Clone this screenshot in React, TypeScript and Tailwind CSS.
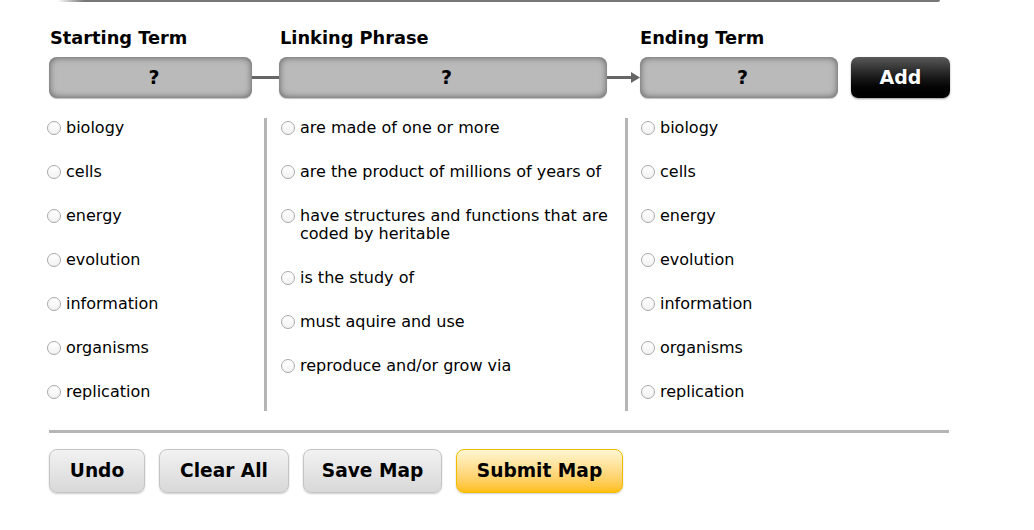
import React from "react";

const startTerms = [
    "biology",
    "cells",
    "energy",
    "evolution",
    "information",
    "organisms",
    "replication",
];

const phrases = [
    "are made of one or more",
    "are the product of millions of years of",
    "have structures and functions that are coded by heritable",
    "is the study of",
    "must aquire and use",
    "reproduce and/or grow via",
];

const font = "font-['Verdana','DejaVu_Sans',sans-serif]";

const Radio = () => (
    <span className="mt-[2px] mr-[5px] inline-block size-[14px] shrink-0 rounded-full border border-[#a8a8a8] bg-gradient-to-b from-white to-[#f2f2f2]" />
);

const TermList = ({ items, className }: { items: string[]; className?: string }) => (
    <ul className={`flex flex-col gap-y-[26px] ${className ?? ""}`}>
        {items.map((item) => (
            <li key={item} className="flex items-start text-[16px] leading-[18px] text-black">
                <Radio />
                <span>{item}</span>
            </li>
        ))}
    </ul>
);

const SlotBox = ({ className }: { className: string }) => (
    <div
        className={`flex h-[41px] items-center justify-center rounded-[8px] bg-[#bababa] pl-[7px] text-[19px] font-bold text-black shadow-[inset_0_0_7px_rgba(0,0,0,0.55),0_1px_1px_rgba(0,0,0,0.25)] ${className}`}
    >
        ?
    </div>
);

const ActionButton = ({
    label,
    className,
    primary,
}: {
    label: string;
    className: string;
    primary?: boolean;
}) => (
    <button
        className={`h-[44px] rounded-[8px] border text-[18.6px] font-bold text-black shadow-[0_1px_2px_rgba(0,0,0,0.2)] ${
            primary
                ? "border-[#f2bd00] bg-gradient-to-b from-[#fff6d0] to-[#ffbf00]"
                : "border-[#c4c4c4] bg-gradient-to-b from-[#f2f2f2] to-[#d8d8d8]"
        } ${className}`}
    >
        {label}
    </button>
);

export default function App() {
    return (
        <div className={`relative h-[530px] w-[1034px] bg-white ${font}`}>
            <div className="ml-[58px] h-[2px] w-[882px] rounded-br-[3px] bg-gradient-to-r from-[#ffffff] via-[#777777] via-[3%] to-[#777777]" />

            <div className="ml-[49px] w-[901px]">
                {/* headings */}
                <div className="mt-[26px] flex h-[20px] items-center text-[17.8px] font-bold text-black">
                    <span className="w-[230px] pl-px">Starting Term</span>
                    <span className="w-[361px] pl-px">Linking Phrase</span>
                    <span>Ending Term</span>
                </div>

                {/* slots */}
                <div className="mt-[9px] flex items-center">
                    <SlotBox className="w-[203px]" />
                    <div className="h-[3px] w-[27px] bg-[#666666]" />
                    <SlotBox className="w-[328px]" />
                    <div className="flex w-[33px] items-center">
                        <div className="h-[3px] flex-1 bg-[#666666]" />
                        <svg width="9" height="11" viewBox="0 0 9 11" className="shrink-0">
                            <path d="M0 0 L9 5.5 L0 11 Z" fill="#666666" />
                        </svg>
                    </div>
                    <SlotBox className="w-[198px]" />
                    <button className="ml-[13px] h-[41px] w-[99px] rounded-[7px] bg-gradient-to-b from-[#5a5a5a] via-[#1a1a1a] to-black text-[19px] font-bold text-white shadow-[0_1px_2px_rgba(0,0,0,0.4)] [text-shadow:0_1px_1px_#000]">
                        Add
                    </button>
                </div>

                {/* lists */}
                <div className="mt-[20px] flex">
                    <TermList items={startTerms} className="-ml-[2px] w-[217px] pt-px pb-[10px]" />
                    <div className="w-[3px] bg-[#b5b5b5]" />
                    <TermList items={phrases} className="w-[358px] pt-px pl-[14px]" />
                    <div className="w-[3px] bg-[#b5b5b5]" />
                    <TermList items={startTerms} className="pt-px pl-[13px]" />
                </div>

                <div className="mt-[19px] h-[3px] w-[900px] bg-[#b5b5b5]" />

                {/* actions */}
                <div className="mt-[16px] flex gap-x-[14px]">
                    <ActionButton label="Undo" className="w-[96px]" />
                    <ActionButton label="Clear All" className="w-[130px]" />
                    <ActionButton label="Save Map" className="w-[139px]" />
                    <ActionButton label="Submit Map" className="w-[167px]" primary />
                </div>
            </div>
        </div>
    );
}
